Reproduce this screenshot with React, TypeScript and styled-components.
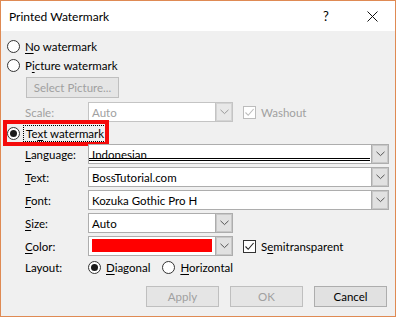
import React from 'react';
import styled, { createGlobalStyle } from 'styled-components';

const Global = createGlobalStyle`
  html, body { margin: 0; padding: 0; background: #fff; }
  body { font-family: "Segoe UI", Lato, "Noto Sans", sans-serif; font-size: 11.5px; color: #000; }
`;

const Window = styled.div`
  width: 396px;
  height: 317px;
  box-sizing: border-box;
  border: 1px solid #df8a53;
  background: #f0f0f0;
  display: flex;
  flex-direction: column;
  position: relative;
  overflow: hidden;
`;

const TitleBar = styled.div`
  height: 30px;
  flex: none;
  background: #fff;
  display: flex;
  align-items: center;
  padding-left: 8px;
`;

const Title = styled.div`
  flex: 1;
  font-size: 12px;
  color: #000;
`;

const TitleBtn = styled.div`
  width: 46px;
  height: 30px;
  display: flex;
  align-items: center;
  justify-content: center;
  font-size: 13px;
`;

const Body = styled.div`
  display: flex;
  flex-direction: column;
  padding: 6px 8px 9px 6px;
`;

const Row = styled.div<{ $mt?: number; $h?: number; $pl?: number }>`
  display: flex;
  align-items: center;
  height: ${(p) => p.$h ?? 20}px;
  margin-top: ${(p) => p.$mt ?? 0}px;
  padding-left: ${(p) => p.$pl ?? 0}px;
  position: relative;
  flex: none;
`;

const RadioCircle = styled.span<{ $on?: boolean; $ml?: number }>`
  width: 13px;
  height: 13px;
  box-sizing: border-box;
  margin-left: ${(p) => p.$ml ?? 0}px;
  border: 1px solid #333;
  border-radius: 50%;
  background: #fff;
  display: inline-flex;
  align-items: center;
  justify-content: center;
  flex: none;
  &::after {
    content: '';
    display: ${(p) => (p.$on ? 'block' : 'none')};
    width: 7px;
    height: 7px;
    border-radius: 50%;
    background: #1a1a1a;
  }
`;

const OptText = styled.span<{ $gap?: number; $disabled?: boolean }>`
  margin-left: ${(p) => p.$gap ?? 5}px;
  color: ${(p) => (p.$disabled ? '#a0a0a0' : '#000')};
  white-space: nowrap;
`;

const FocusText = styled.span`
  margin-left: 3px;
  padding: 0 1px 0 2px;
  border: 1px dotted #000;
  line-height: 15px;
  white-space: nowrap;
`;

const Key = styled.span`
  text-decoration: underline;
  text-underline-offset: 2px;
`;

const Highlight = styled.div`
  position: absolute;
  left: -4px;
  top: -4px;
  width: 106px;
  height: 26px;
  box-sizing: border-box;
  border: 4px solid #f50a0a;
  pointer-events: none;
`;

const Label = styled.span<{ $disabled?: boolean }>`
  width: 63px;
  flex: none;
  color: ${(p) => (p.$disabled ? '#a0a0a0' : '#000')};
  white-space: nowrap;
`;

const Button = styled.div<{ $w: number; $disabled?: boolean; $ml?: number }>`
  width: ${(p) => p.$w}px;
  height: 21px;
  box-sizing: border-box;
  margin-left: ${(p) => p.$ml ?? 0}px;
  border: 1px solid ${(p) => (p.$disabled ? '#bfbfbf' : '#adadad')};
  background: ${(p) => (p.$disabled ? '#e5e5e5' : '#e1e1e1')};
  color: ${(p) => (p.$disabled ? '#a0a0a0' : '#000')};
  display: flex;
  align-items: center;
  justify-content: center;
  flex: none;
`;

const Combo = styled.div<{ $w: number; $disabled?: boolean }>`
  width: ${(p) => p.$w}px;
  height: 20px;
  box-sizing: border-box;
  border: 1px solid ${(p) => (p.$disabled ? '#c4c4c4' : '#adadad')};
  background: #fff;
  display: flex;
  flex: none;
`;

const Field = styled.div<{ $disabled?: boolean }>`
  flex: 1;
  display: flex;
  align-items: center;
  padding-left: 3px;
  color: ${(p) => (p.$disabled ? '#a0a0a0' : '#000')};
  position: relative;
  white-space: nowrap;
`;

const DoubleLine = styled.div`
  position: absolute;
  left: 0;
  right: 1px;
  bottom: 2px;
  height: 3px;
  border-top: 1px solid #000;
  border-bottom: 1px solid #000;
  box-sizing: border-box;
`;

const Swatch = styled.div`
  flex: 1;
  margin: 2px 3px 3px 3px;
  background: #ff0000;
`;

const DropBtn = styled.div<{ $disabled?: boolean }>`
  width: 17px;
  flex: none;
  box-sizing: border-box;
  background: ${(p) => (p.$disabled ? '#e8e8e8' : '#e1e1e1')};
  border-left: 1px solid ${(p) => (p.$disabled ? '#c4c4c4' : '#adadad')};
  box-shadow: inset 0 0 0 1px ${(p) => (p.$disabled ? '#d4d4d4' : '#c8c8c8')};
  display: flex;
  align-items: center;
  justify-content: center;
`;

const Check = styled.span<{ $disabled?: boolean }>`
  width: 13px;
  height: 13px;
  box-sizing: border-box;
  border: 1px solid ${(p) => (p.$disabled ? '#bcbcbc' : '#333')};
  background: #fff;
  margin-left: 10px;
  display: inline-flex;
  align-items: center;
  justify-content: center;
  flex: none;
`;

const ButtonBar = styled.div`
  display: flex;
  justify-content: flex-end;
  margin-top: 10px;
  flex: none;
`;

const Chevron = ({ color = '#555' }: { color?: string }) => (
  <svg width="9" height="6" viewBox="0 0 9 6">
    <polyline points="0.5,0.8 4.5,4.6 8.5,0.8" fill="none" stroke={color} strokeWidth="1" />
  </svg>
);

const Tick = ({ color = '#222' }: { color?: string }) => (
  <svg width="11" height="11" viewBox="0 0 11 11">
    <polyline points="1.5,5.5 4.2,8.3 9.6,2" fill="none" stroke={color} strokeWidth="1.1" />
  </svg>
);

const CloseIcon = () => (
  <svg width="11" height="11" viewBox="0 0 11 11">
    <path d="M0.5 0.5 L10.5 10.5 M10.5 0.5 L0.5 10.5" stroke="#111" strokeWidth="1" />
  </svg>
);

export default function App() {
  return (
    <>
      <Global />
      <Window>
        <TitleBar>
          <Title>Printed Watermark</Title>
          <TitleBtn>?</TitleBtn>
          <TitleBtn>
            <CloseIcon />
          </TitleBtn>
        </TitleBar>
        <Body>
          <Row $h={18}>
            <RadioCircle />
            <OptText>
              <Key>N</Key>o watermark
            </OptText>
          </Row>
          <Row $h={18} $mt={1}>
            <RadioCircle />
            <OptText>
              P<Key>i</Key>cture watermark
            </OptText>
          </Row>
          <Row $h={21} $mt={3} $pl={19}>
            <Button $w={93} $disabled>
              Select Picture...
            </Button>
          </Row>
          <Row $mt={4} $pl={18}>
            <Label $disabled>Scale:</Label>
            <Combo $w={145} $disabled>
              <Field $disabled>Auto</Field>
              <DropBtn $disabled>
                <Chevron color="#9a9a9a" />
              </DropBtn>
            </Combo>
            <Check $disabled>
              <Tick color="#bcbcbc" />
            </Check>
            <OptText $disabled>Washout</OptText>
          </Row>
          <Row $h={18} $mt={2}>
            <RadioCircle $on />
            <FocusText>
              Te<Key>x</Key>t watermark
            </FocusText>
            <Highlight />
          </Row>
          <Row $mt={2} $pl={18}>
            <Label>
              <Key>L</Key>anguage:
            </Label>
            <Combo $w={301}>
              <Field>
                Indonesian
                <DoubleLine />
              </Field>
              <DropBtn>
                <Chevron />
              </DropBtn>
            </Combo>
          </Row>
          <Row $mt={3} $pl={18}>
            <Label>
              <Key>T</Key>ext:
            </Label>
            <Combo $w={301}>
              <Field>BossTutorial.com</Field>
              <DropBtn>
                <Chevron />
              </DropBtn>
            </Combo>
          </Row>
          <Row $mt={3} $pl={18}>
            <Label>
              <Key>F</Key>ont:
            </Label>
            <Combo $w={301}>
              <Field>Kozuka Gothic Pro H</Field>
              <DropBtn>
                <Chevron />
              </DropBtn>
            </Combo>
          </Row>
          <Row $mt={3} $pl={18}>
            <Label>
              <Key>S</Key>ize:
            </Label>
            <Combo $w={145}>
              <Field>Auto</Field>
              <DropBtn>
                <Chevron />
              </DropBtn>
            </Combo>
          </Row>
          <Row $mt={3} $pl={18}>
            <Label>
              <Key>C</Key>olor:
            </Label>
            <Combo $w={145}>
              <Swatch />
              <DropBtn>
                <Chevron />
              </DropBtn>
            </Combo>
            <Check>
              <Tick />
            </Check>
            <OptText>
              S<Key>e</Key>mitransparent
            </OptText>
          </Row>
          <Row $h={18} $mt={2} $pl={18}>
            <Label>Layout:</Label>
            <RadioCircle $on />
            <OptText>
              <Key>D</Key>iagonal
            </OptText>
            <RadioCircle $ml={12} />
            <OptText>
              <Key>H</Key>orizontal
            </OptText>
          </Row>
          <ButtonBar>
            <Button $w={73} $disabled>
              Apply
            </Button>
            <Button $w={73} $ml={11} $disabled>
              OK
            </Button>
            <Button $w={73} $ml={11}>
              Cancel
            </Button>
          </ButtonBar>
        </Body>
      </Window>
    </>
  );
}
